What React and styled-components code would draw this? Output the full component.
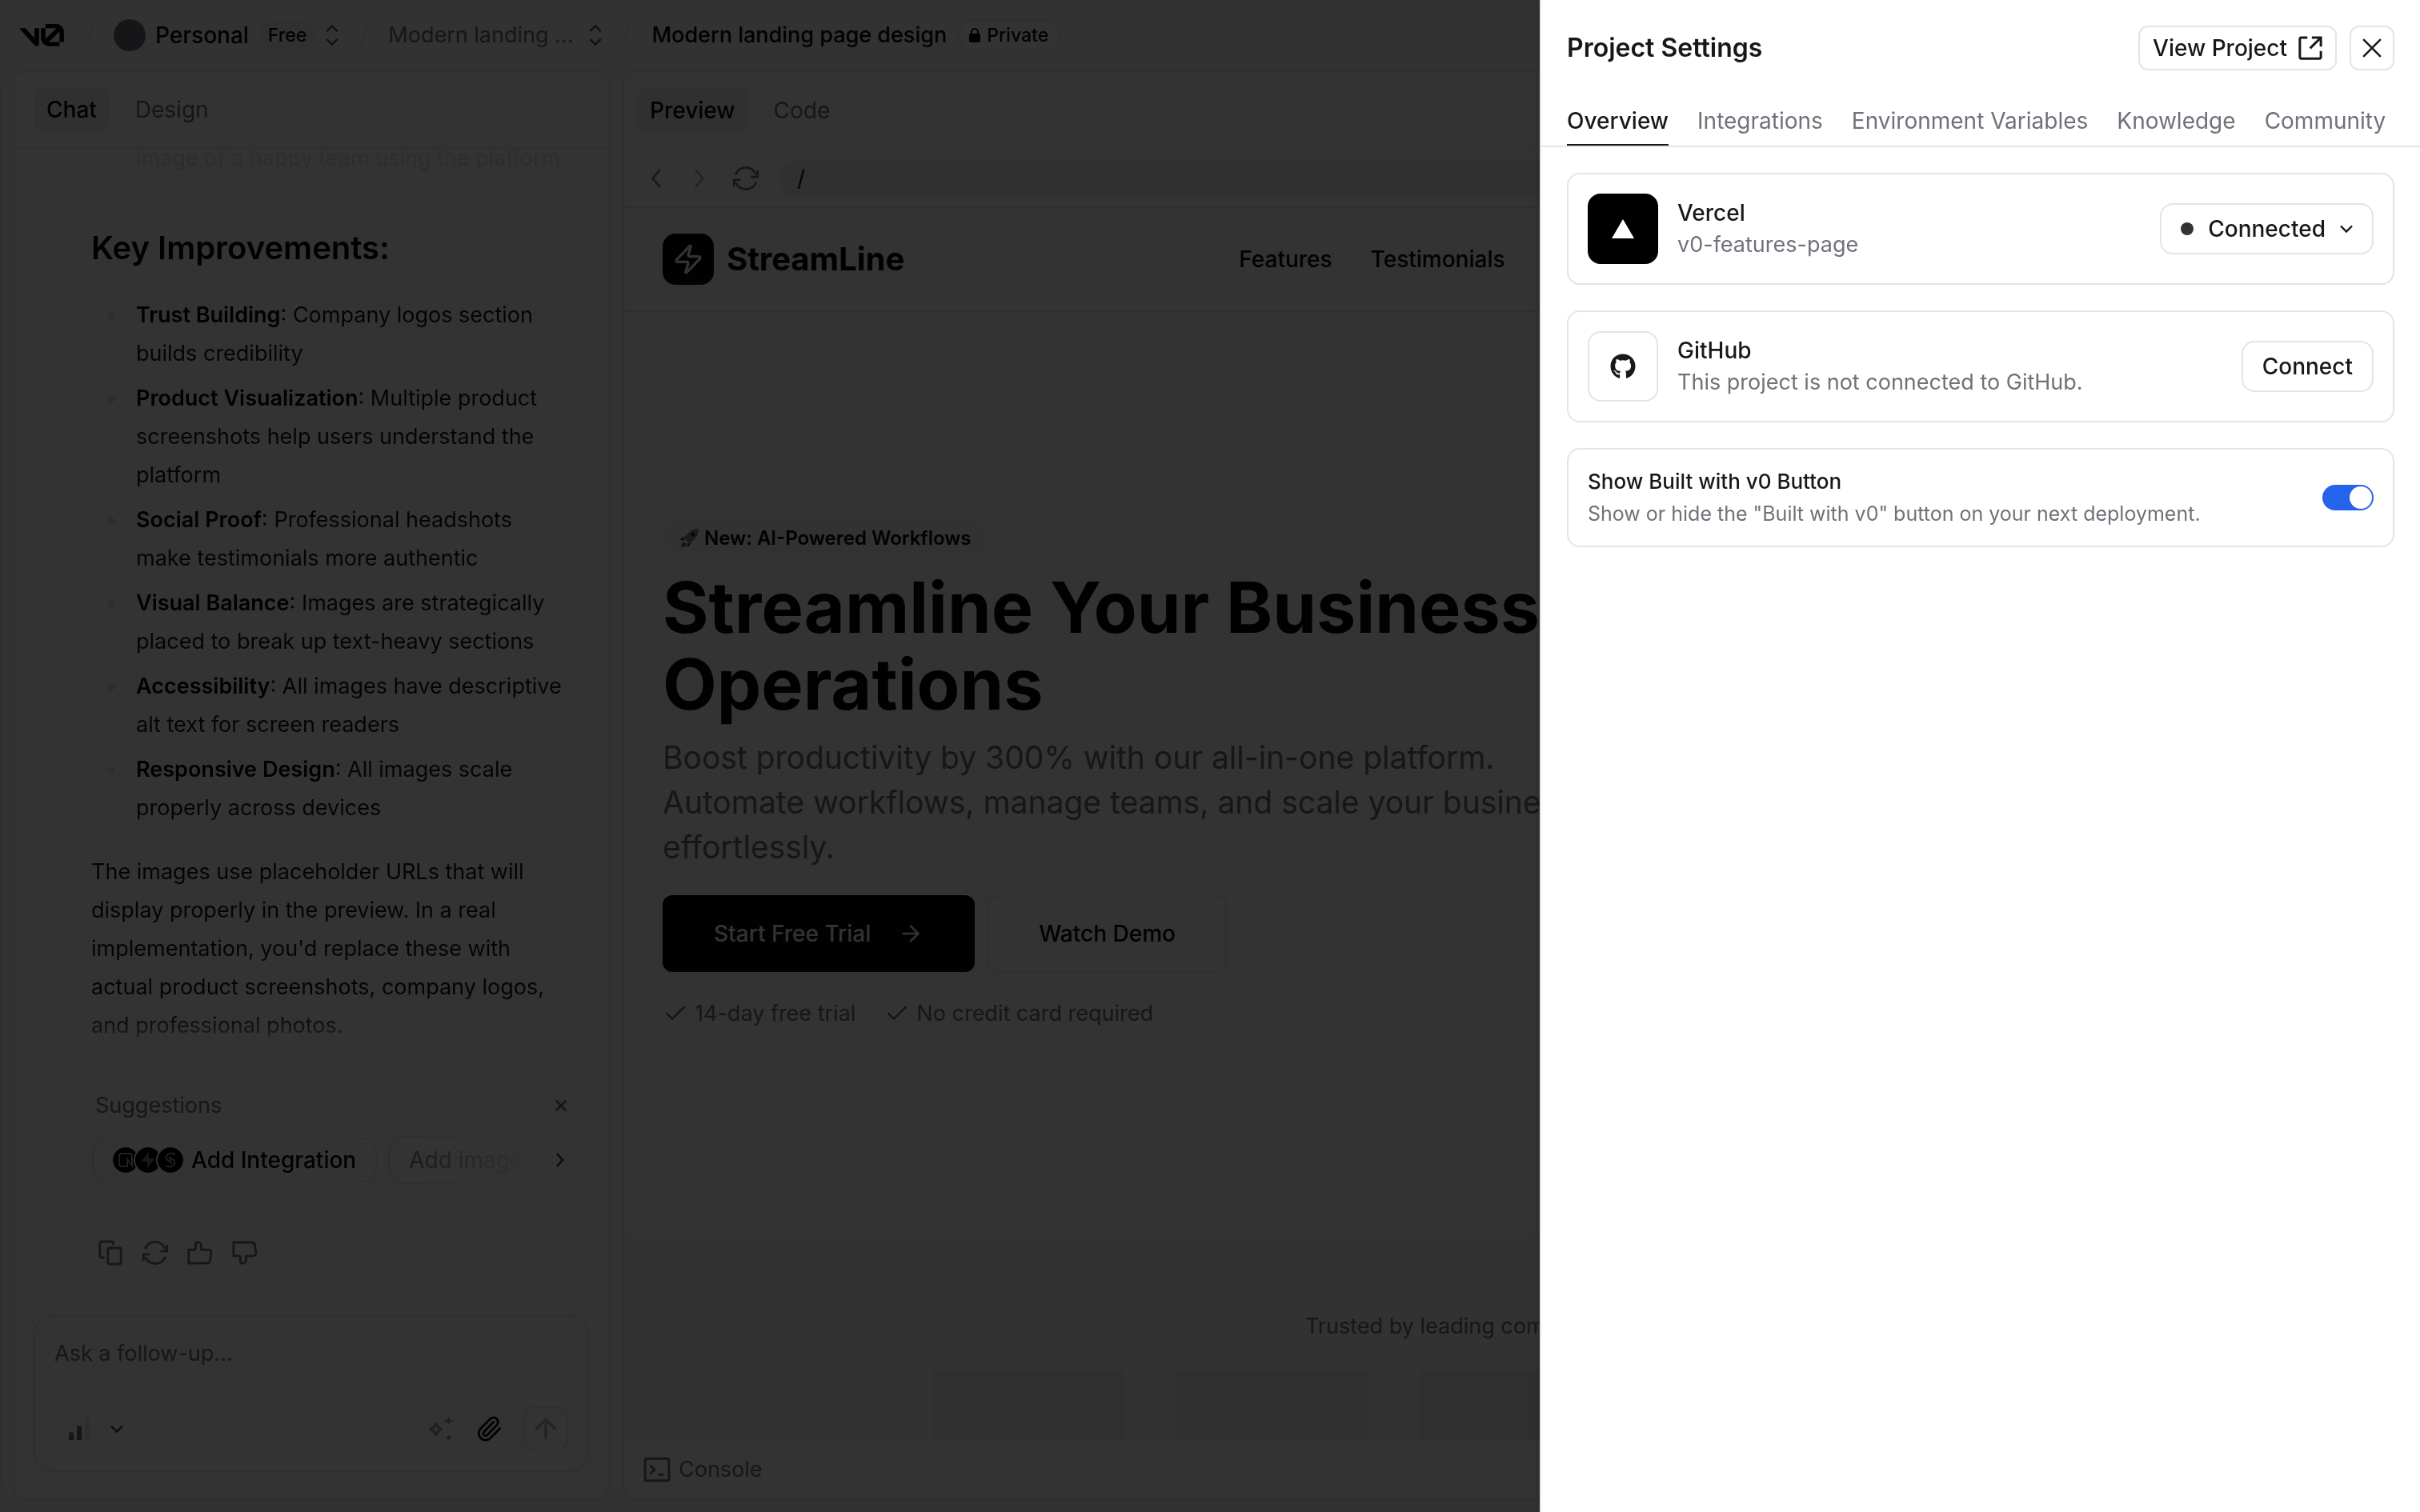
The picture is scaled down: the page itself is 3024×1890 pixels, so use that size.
import React, { useState } from "react";
import styled, { createGlobalStyle } from "styled-components";
import { Paperclip, Zap, ArrowUp, ArrowRight, Check, X } from "lucide-react";
import { FaGithub } from "react-icons/fa";

const GlobalStyle = createGlobalStyle`
  * {
    box-sizing: border-box;
  }
  body {
    margin: 0;
    background: #fafafa;
    color: #09090b;
    font-family: Inter, "Liberation Sans", sans-serif;
    font-size: 28px;
    line-height: 40px;
  }
  button, input, textarea {
    font: inherit;
    color: inherit;
  }
  button {
    border: 0;
    padding: 0;
    background: none;
    cursor: pointer;
  }
  a {
    color: inherit;
    text-decoration: none;
  }
  h1, h2, h3, p, ul {
    margin: 0;
    padding: 0;
  }
  svg {
    display: block;
    flex-shrink: 0;
  }
`;

const Page = styled.div`
  display: flex;
  flex-direction: column;
  height: 100vh;
  overflow: hidden;
`;

const Header = styled.header`
  display: flex;
  align-items: center;
  gap: 24px;
  height: 88px;
  padding: 0 24px;
  flex-shrink: 0;
  white-space: nowrap;
`;

const Crumb = styled.button`
  display: flex;
  align-items: center;
  gap: ${(props) => (props.$muted ? 20 : 12)}px;
  font-size: ${(props) => (props.$muted ? 27 : 28)}px;
  font-weight: ${(props) => (props.$muted ? 400 : 500)};
  color: ${(props) => (props.$muted ? "#71717a" : "#09090b")};
`;

const Avatar = styled.span`
  width: 40px;
  height: 40px;
  border-radius: 50%;
  background: #71717a;
`;

const Badge = styled.span`
  display: flex;
  align-items: center;
  gap: 8px;
  height: ${(props) => (props.$outline ? 40 : 36)}px;
  padding: 0 12px;
  border: ${(props) => (props.$outline ? "2px solid #e8e8ea" : "0")};
  border-radius: 20px;
  background: ${(props) => (props.$outline ? "#fff" : "#f0f0f1")};
  font-size: 23px;
  font-weight: 500;
`;

const CrumbTitle = styled.div`
  display: flex;
  align-items: center;
  gap: 14px;
  font-size: 27px;
  font-weight: 500;
`;

const Workspace = styled.div`
  display: flex;
  gap: 16px;
  flex: 1;
  min-height: 0;
  padding: 0 16px 16px 0;
`;

const SidebarEdge = styled.div`
  width: 2px;
  margin: 16px -2px 16px 0;
  background: #eaeaec;
`;

const Panel = styled.section`
  display: flex;
  flex-direction: column;
  min-width: 0;
  border: 2px solid #eaeaec;
  border-radius: 16px;
  background: #fff;
  box-shadow: 0 2px 4px rgba(0, 0, 0, 0.06);
  overflow: hidden;
`;

const ChatPanel = styled(Panel)`
  flex: 0 0 746px;
`;

const PreviewPanel = styled(Panel)`
  flex: 1;
`;

const PanelTabs = styled.div`
  display: flex;
  align-items: center;
  gap: 16px;
  height: ${(props) => props.$height || 96}px;
  padding: 0 ${(props) => props.$inset || 24}px;
  border-bottom: 2px solid #eaeaec;
  flex-shrink: 0;
`;

const PanelTab = styled.button`
  height: 56px;
  padding: 0 16px;
  border-radius: 12px;
  font-size: 28px;
  font-weight: ${(props) => (props.$active ? 500 : 400)};
  color: ${(props) => (props.$active ? "#09090b" : "#71717a")};
  background: ${(props) => (props.$active ? "#ededef" : "none")};
`;

const Messages = styled.div`
  display: flex;
  flex-direction: column;
  justify-content: flex-end;
  flex: 1;
  min-height: 0;
  padding: 0 52px 0 96px;
  overflow: hidden;
  font-size: 27px;
  line-height: 48px;
  color: #18181b;
  mask-image: linear-gradient(
    rgba(0, 0, 0, 0.1),
    rgba(0, 0, 0, 0.2) 40px,
    #000 100px,
    #000 calc(100% - 40px),
    rgba(0, 0, 0, 0.3)
  );
`;

const EarlierLine = styled.p`
  padding-left: 56px;
  margin-bottom: 64px;
  white-space: nowrap;
`;

const MessageHeading = styled.h3`
  margin-bottom: 36px;
  font-size: 40px;
  font-weight: 600;
  line-height: 48px;
  color: #09090b;
`;

const Points = styled.ul`
  display: flex;
  flex-direction: column;
  gap: 8px;
  margin-bottom: 32px;
  padding-left: 56px;
  list-style: none;
`;

const Point = styled.li`
  position: relative;

  &::before {
    content: "";
    position: absolute;
    left: -36px;
    top: 20px;
    width: 10px;
    height: 10px;
    border-radius: 50%;
    background: #e4e4e7;
  }

  & strong {
    font-weight: 600;
    color: #09090b;
  }
`;

const Suggestions = styled.div`
  display: flex;
  flex-direction: column;
  gap: 18px;
  padding: 56px 48px 0 97px;
`;

const SuggestionsHead = styled.div`
  display: flex;
  align-items: center;
  justify-content: space-between;
  padding-left: 4px;
  font-size: 27px;
  color: #71717a;
`;

const SuggestionRow = styled.div`
  display: flex;
  align-items: center;
  justify-content: space-between;
  height: 60px;
  padding-right: 8px;
  color: #3f3f46;
`;

const PillTrack = styled.div`
  display: flex;
  align-items: center;
  gap: 14px;
  width: 556px;
  overflow: hidden;
  white-space: nowrap;
  mask-image: linear-gradient(90deg, #000 68%, transparent);
`;

const Pill = styled.button`
  display: flex;
  align-items: center;
  gap: 10px;
  height: ${(props) => (props.$muted ? 60 : 56)}px;
  padding: 0 24px;
  border: 2px solid #e8e8ea;
  border-radius: 18px;
  flex-shrink: 0;
  font-weight: ${(props) => (props.$muted ? 400 : 500)};
  color: ${(props) => (props.$muted ? "#71717a" : "#09090b")};
`;

const LogoStack = styled.span`
  display: flex;

  & svg {
    border-radius: 50%;
    box-shadow: 0 0 0 2px #fff;
  }
  & svg + svg {
    margin-left: -4px;
  }
`;

const Actions = styled.div`
  display: flex;
  gap: 24px;
  padding: 70px 0 62px 104px;
  color: #71717a;
`;

const Composer = styled.form`
  display: flex;
  flex-direction: column;
  height: 196px;
  margin: 0 24px 32px;
  padding: 26px 24px 24px;
  border: 2px solid #e8e8ea;
  border-radius: 24px;
  box-shadow: 0 2px 4px rgba(0, 0, 0, 0.06);
  flex-shrink: 0;
`;

const ComposerInput = styled.textarea`
  flex: 1;
  padding: 0;
  border: 0;
  outline: 0;
  resize: none;
  background: none;
  font-size: 27px;

  &::placeholder {
    color: #71717a;
    opacity: 1;
  }
`;

const ComposerBar = styled.div`
  display: flex;
  align-items: center;
  justify-content: space-between;
  padding-left: 18px;
`;

const ComposerGroup = styled.div`
  display: flex;
  align-items: center;
  gap: ${(props) => props.$gap}px;
`;

const SendButton = styled.button`
  display: grid;
  place-items: center;
  width: 56px;
  height: 56px;
  border: 2px solid #e8e8ea;
  border-radius: 14px;
  color: #b4b4ba;
`;

const AddressBar = styled.div`
  display: flex;
  align-items: center;
  gap: 26px;
  height: 72px;
  padding: 0 34px;
  border-bottom: 2px solid #eaeaec;
  background: #fcfcfc;
  flex-shrink: 0;
  color: #71717a;
`;

const HistoryButtons = styled.div`
  display: flex;
  gap: 42px;
  margin-right: 10px;
`;

const HistoryButton = styled.button`
  opacity: ${(props) => (props.disabled ? 0.6 : 1)};
`;

const AddressInput = styled.input`
  flex: 1;
  height: 48px;
  padding: 0 22px;
  border: 0;
  border-radius: 24px;
  background: #ededef;
  color: #09090b;
`;

const Site = styled.div`
  display: flex;
  flex-direction: column;
  flex: 1;
  min-height: 0;
`;

const SiteNav = styled.nav`
  display: flex;
  align-items: center;
  gap: 48px;
  height: 130px;
  padding: 0 48px;
  border-bottom: 2px solid #eaeaec;
  font-weight: 500;
`;

const Brand = styled.a`
  display: flex;
  align-items: center;
  gap: 16px;
  margin-right: 370px;
  font-size: 40px;
  font-weight: 700;
`;

const BrandMark = styled.span`
  display: grid;
  place-items: center;
  width: 64px;
  height: 64px;
  border-radius: 16px;
  background: #09090b;
  color: #fafafa;
`;

const Hero = styled.div`
  display: flex;
  flex-direction: column;
  justify-content: center;
  align-items: flex-start;
  flex: 1;
  width: 1240px;
  padding: 6px 48px 0;
`;

const HeroBadge = styled.span`
  display: flex;
  align-items: center;
  gap: 6px;
  height: 44px;
  margin-bottom: 16px;
  padding: 0 20px;
  border-radius: 22px;
  background: #fafafa;
  font-size: 24px;
  font-weight: 600;
`;

const HeroTitle = styled.h1`
  margin-bottom: 16px;
  font-size: 88px;
  font-weight: 700;
  line-height: 96px;
`;

const HeroText = styled.p`
  margin-bottom: 32px;
  font-size: 39px;
  line-height: 56px;
  color: #71717a;
`;

const HeroButtons = styled.div`
  display: flex;
  gap: 16px;
  margin-bottom: 32px;
`;

const HeroButton = styled.button`
  display: flex;
  align-items: center;
  gap: 34px;
  height: 96px;
  padding: 0 62px;
  border: 2px solid ${(props) => (props.$primary ? "#09090b" : "#eaeaec")};
  border-radius: 12px;
  background: ${(props) => (props.$primary ? "#09090b" : "#fff")};
  color: ${(props) => (props.$primary ? "#fafafa" : "#09090b")};
  font-weight: 500;
`;

const Perks = styled.div`
  display: flex;
  gap: 36px;
  font-size: 27px;
  color: #71717a;
`;

const Perk = styled.span`
  display: flex;
  align-items: center;
  gap: 8px;
`;

const Trusted = styled.div`
  display: flex;
  flex-direction: column;
  align-items: center;
  gap: 34px;
  height: 260px;
  padding-top: 96px;
  background: #f7f7f8;
  font-size: 27px;
  color: #71717a;
  white-space: nowrap;
`;

const TrustedLogos = styled.div`
  display: grid;
  grid-template-columns: repeat(5, 240px);
  gap: 64px;
`;

const TrustedLogo = styled.div`
  height: 88px;
  background: #ebebed;
`;

const ConsoleBar = styled.button`
  display: flex;
  align-items: center;
  gap: 10px;
  height: 70px;
  padding: 0 24px;
  background: #fff;
  font-size: 27px;
  color: #71717a;
  flex-shrink: 0;
`;

const Overlay = styled.div`
  position: fixed;
  inset: 0;
  background: rgba(0, 0, 0, 0.8);
`;

const Drawer = styled.aside`
  position: fixed;
  top: 0;
  right: 0;
  bottom: 0;
  width: min(1100px, 100vw);
  border-left: 2px solid #e4e4e7;
  background: #fff;
  box-shadow: 0 0 12px rgba(0, 0, 0, 0.2);
  color: #18181b;
`;

const DrawerHeader = styled.div`
  display: flex;
  align-items: center;
  gap: 16px;
  height: 120px;
  padding: 0 32px;
`;

const DrawerTitle = styled.h2`
  flex: 1;
  font-size: 32px;
  font-weight: 600;
`;

const OutlineLink = styled.a`
  display: flex;
  align-items: center;
  gap: 14px;
  height: 56px;
  padding: 0 16px;
  border: 2px solid #e4e4e7;
  border-radius: 12px;
  font-weight: 500;
`;

const CloseButton = styled.button`
  display: grid;
  place-items: center;
  width: 56px;
  height: 56px;
  border: 2px solid #e4e4e7;
  border-radius: 12px;
`;

const DrawerTabs = styled.div`
  display: flex;
  gap: 36px;
  height: 64px;
  padding: 0 32px;
  border-bottom: 2px solid #e4e4e7;
  white-space: nowrap;
`;

const DrawerTab = styled.button`
  padding-top: 2px;
  border-bottom: 2px solid ${(props) => (props.$active ? "#18181b" : "transparent")};
  font-weight: ${(props) => (props.$active ? 500 : 400)};
  color: ${(props) => (props.$active ? "#18181b" : "#71717a")};
`;

const Cards = styled.div`
  display: flex;
  flex-direction: column;
  gap: 32px;
  padding: 32px;
`;

const Card = styled.div`
  display: flex;
  align-items: center;
  gap: 24px;
  padding: ${(props) => (props.$compact ? "20px" : "24px")} 24px;
  border: 2px solid #e4e4e7;
  border-radius: 16px;
`;

const CardIcon = styled.div`
  display: grid;
  place-items: center;
  width: 88px;
  height: 88px;
  border: 2px solid ${(props) => (props.$dark ? "#000" : "#e4e4e7")};
  border-radius: 16px;
  background: ${(props) => (props.$dark ? "#000" : "#fff")};
  color: ${(props) => (props.$dark ? "#fff" : "#18181b")};
`;

const CardText = styled.div`
  flex: 1;
`;

const CardTitle = styled.div`
  display: block;
  font-size: ${(props) => (props.$compact ? 26 : 28)}px;
  font-weight: 500;
`;

const CardNote = styled.p`
  font-size: ${(props) => (props.$compact ? 25 : 27)}px;
  color: #71717a;
`;

const CardButton = styled.button`
  display: flex;
  align-items: center;
  gap: 18px;
  height: 64px;
  padding: 0 24px;
  border: 2px solid #e4e4e7;
  border-radius: 16px;
  font-weight: 500;
`;

const StatusDot = styled.span`
  width: 16px;
  height: 16px;
  border-radius: 50%;
  background: #333;
`;

const Switch = styled.input`
  appearance: none;
  display: flex;
  align-items: center;
  width: 64px;
  height: 32px;
  margin: 0;
  padding: 2px;
  border-radius: 16px;
  background: ${(props) => (props.checked ? "#2563eb" : "#e4e4e7")};
  justify-content: ${(props) => (props.checked ? "flex-end" : "flex-start")};

  &::before {
    content: "";
    width: 28px;
    height: 28px;
    border-radius: 50%;
    background: #fff;
  }
`;

const points = [
  ["Trust Building", "Company logos section builds credibility"],
  ["Product Visualization", "Multiple product screenshots help users understand the platform"],
  ["Social Proof", "Professional headshots make testimonials more authentic"],
  ["Visual Balance", "Images are strategically placed to break up text-heavy sections"],
  ["Accessibility", "All images have descriptive alt text for screen readers"],
  ["Responsive Design", "All images scale properly across devices"],
];

const drawerTabs = ["Overview", "Integrations", "Environment Variables", "Knowledge", "Community"];

function Icon({ size = 32, width, box = "0 0 16 16", stroke = 1.4, color = "currentColor", children }) {
  return (
    <svg
      width={width || size}
      height={size}
      viewBox={box}
      fill="none"
      stroke={color}
      strokeWidth={stroke}
      aria-hidden="true"
    >
      {children}
    </svg>
  );
}

const V0Logo = () => (
  <svg width="56" height="28" viewBox="0 0 40 20" fill="#09090b" aria-label="v0">
    <path d="M23.39 0h9.53c3.86 0 7 3.13 7 7v9.08H36V7c0-.1 0-.19-.01-.28l-9.53 9.36h9.54v3.7h-9.44c-3.86 0-7.08-3.17-7.08-7.03V3.69h3.91v9.06c0 .18.01.35.04.52l9.74-9.57a3 3 0 0 0-.25-.01h-9.53V0Z" />
    <path d="M13.77 19.1 0 3.69h5.54l8.08 9.04V3.69h4.13v13.88c0 2.1-2.59 3.09-3.98 1.53Z" />
  </svg>
);

const Slash = () => (
  <svg width="14" height="32" viewBox="0 0 14 32" stroke="#e4e4e7" strokeWidth="2" aria-hidden="true">
    <path d="M2 31 12 1" />
  </svg>
);

const UpDown = () => (
  <Icon size={32} width={16} box="0 0 8 16" stroke={1.2} color="#52525b">
    <path d="m.6 5.6 3.4-3.4 3.4 3.4M.6 10.4 4 13.8l3.4-3.4" />
  </Icon>
);

const Lock = () => (
  <svg width="14" height="18" viewBox="0 0 14 18" aria-hidden="true">
    <path d="M3 8V5a4 4 0 0 1 8 0v3" fill="none" stroke="#09090b" strokeWidth="2" />
    <rect y="7" width="14" height="11" rx="2" fill="#09090b" />
  </svg>
);

const Refresh = () => (
  <Icon>
    <path d="M1.6 5.6a6.75 6.75 0 0 1 12.6-.2M15.4 3v4.1h-4.2M14.4 10.4a6.75 6.75 0 0 1-12.6.2M.6 13V8.9h4.2" />
  </Icon>
);

const Copy = () => (
  <Icon>
    <rect x="6.4" y="5" width="8.2" height="10" rx="1" />
    <path d="M9.8 3.2V2a1 1 0 0 0-1-1H2.4a1 1 0 0 0-1 1v8a1 1 0 0 0 1 1h1.9" />
  </Icon>
);

const thumbPath =
  "M.9 6.1h3.2c.7 0 1.1-.4 1.1-1.1V2.6c0-.7.5-1.3 1.2-1.3 1.3 0 2.4 1.1 2.4 2.4v2.4h4.3c1.2 0 2 1 1.8 2.1l-.7 4.6a2 2 0 0 1-2 1.7H.9z";

const ThumbUp = () => (
  <Icon>
    <path d={thumbPath} />
  </Icon>
);

const ThumbDown = () => (
  <Icon>
    <path transform="matrix(1 0 0 -1 0 16)" d={thumbPath} />
  </Icon>
);

const ChevronDownSmall = ({ color }) => (
  <Icon size={16} stroke={2.4} color={color}>
    <path d="m1 4.500 7 7 7-7" />
  </Icon>
);

const ChevronSide = ({ flip, size = 24, stroke = 2.6 }) => (
  <Icon size={size} width={size / 2} box="0 0 12 24" stroke={stroke}>
    <path d={flip ? "M11 1 1.5 12 11 23" : "m1 1 9.5 11L1 23"} />
  </Icon>
);

const Sparkles = () => (
  <svg width="34" height="34" viewBox="0 0 32 32" fill="#a1a1aa" aria-hidden="true">
    <path
      d="M10 9c1 4.600 3 6.400 7.400 7.400C13 17.400 11 19.400 10 24c-1-4.600-3-6.600-7.400-7.600C7 15.400 9 13.600 10 9Z"
      fill="none"
      stroke="#a1a1aa"
      strokeWidth="3"
    />
    <path d="M25 1c.8 3.500 2 4.700 6 5.500-4 .8-5.200 2-6 6-.8-4-2-5.200-6-6 4-.8 5.200-2 6-5.500ZM25.500 23l3.500 3.500-3.500 3.500-3.500-3.500z" />
  </svg>
);

const Bars = () => (
  <svg width="28" height="28" viewBox="0 0 28 28" fill="#71717a" aria-hidden="true">
    <path d="M0 21a3 3 0 0 1 6 0v7H0zM10 13a3 3 0 0 1 6 0v15h-6z" />
    <path d="M20 3a3 3 0 0 1 6 0v25h-6z" fill="#e4e4e7" />
  </svg>
);

const ExternalLink = () => (
  <Icon size={30} stroke={1.6}>
    <path d="M6 1H2a1 1 0 0 0-1 1v12a1 1 0 0 0 1 1h12a1 1 0 0 0 1-1v-4M9 1h6v6M14.700 1.300 7.800 8.200" />
  </Icon>
);

const Rocket = () => (
  <svg width="26" height="26" viewBox="0 0 26 26" aria-hidden="true">
    <path d="M7 10 1 15l6 .5M16 19l-5 6-.5-6" fill="#52525b" />
    <path d="M25 1C17 1 11 5 7 13l6 6c8-4 12-10 12-18Z" fill="#85858c" />
    <path d="M7 17c-3 1-4 4-4 7 3 0 6-1 7-4z" fill="#71717a" />
    <circle cx="18" cy="8" r="2.500" fill="#27272a" />
  </svg>
);

const IntegrationLogos = () => (
  <LogoStack>
    <svg width="32" height="32" viewBox="0 0 32 32" aria-hidden="true">
      <circle cx="16" cy="16" r="16" fill="#000" />
      <path
        d="M16 24h-5a3 3 0 0 1-3-3V11a3 3 0 0 1 3-3h10a3 3 0 0 1 3 3v12l-6-8v9z"
        fill="none"
        stroke="#a1a1aa"
        strokeWidth="2"
      />
    </svg>
    <svg width="32" height="32" viewBox="0 0 32 32" aria-hidden="true">
      <circle cx="16" cy="16" r="16" fill="#000" />
      <path d="M17 6 7 18h8v8l10-12h-8z" fill="#71717a" />
    </svg>
    <svg width="32" height="32" viewBox="0 0 32 32" aria-hidden="true">
      <circle cx="16" cy="16" r="16" fill="#000" />
      <g fill="none" stroke="#a1a1aa" strokeWidth="2">
        <path d="M22 9c-5-3-10-1-11 3-1 3 1 5 4 5 2 0 3 2 1 3" />
        <path d="M10 23c5 3 10 1 11-3 1-3-1-5-4-5-2 0-3-2-1-3" />
      </g>
    </svg>
  </LogoStack>
);

function TopBar() {
  return (
    <Header>
      <V0Logo />
      <Slash />
      <Crumb>
        <Avatar />
        Personal
        <Badge>Free</Badge>
        <UpDown />
      </Crumb>
      <Slash />
      <Crumb $muted>
        Modern landing ...
        <UpDown />
      </Crumb>
      <Slash />
      <CrumbTitle>
        Modern landing page design
        <Badge $outline>
          <Lock />
          Private
        </Badge>
      </CrumbTitle>
    </Header>
  );
}

function Chat() {
  return (
    <ChatPanel>
      <PanelTabs>
        <PanelTab $active>Chat</PanelTab>
        <PanelTab>Design</PanelTab>
      </PanelTabs>
      <Messages>
        <EarlierLine>image of a happy team using the platform</EarlierLine>
        <MessageHeading>Key Improvements:</MessageHeading>
        <Points>
          {points.map(([name, text]) => (
            <Point key={name}>
              <strong>{name}</strong>: {text}
            </Point>
          ))}
        </Points>
        <p>
          The images use placeholder URLs that will display properly in the preview. In a real
          implementation, you'd replace these with actual product screenshots, company logos, and
          professional photos.
        </p>
      </Messages>
      <Suggestions>
        <SuggestionsHead>
          Suggestions
          <button aria-label="Dismiss suggestions">
            <X size={22} strokeWidth={3} />
          </button>
        </SuggestionsHead>
        <SuggestionRow>
          <PillTrack>
            <Pill>
              <IntegrationLogos />
              Add Integration
            </Pill>
            <Pill $muted>Add image generation</Pill>
          </PillTrack>
          <button aria-label="More suggestions">
            <ChevronSide size={18} stroke={3.4} />
          </button>
        </SuggestionRow>
      </Suggestions>
      <Actions>
        <button aria-label="Copy">
          <Copy />
        </button>
        <button aria-label="Retry">
          <Refresh />
        </button>
        <button aria-label="Good response">
          <ThumbUp />
        </button>
        <button aria-label="Bad response">
          <ThumbDown />
        </button>
      </Actions>
      <Composer>
        <ComposerInput aria-label="Ask a follow-up" placeholder="Ask a follow-up…" />
        <ComposerBar>
          <ComposerGroup $gap={24}>
            <Bars />
            <ChevronDownSmall color="#3f3f46" />
          </ComposerGroup>
          <ComposerGroup $gap={26}>
            <Sparkles />
            <Paperclip size={34} strokeWidth={2} />
            <SendButton type="button" aria-label="Send">
              <ArrowUp size={40} strokeWidth={2} />
            </SendButton>
          </ComposerGroup>
        </ComposerBar>
      </Composer>
    </ChatPanel>
  );
}

function Preview() {
  return (
    <PreviewPanel>
      <PanelTabs $height={98} $inset={16}>
        <PanelTab $active>Preview</PanelTab>
        <PanelTab>Code</PanelTab>
      </PanelTabs>
      <AddressBar>
        <HistoryButtons>
          <HistoryButton aria-label="Back">
            <ChevronSide flip />
          </HistoryButton>
          <HistoryButton aria-label="Forward" disabled>
            <ChevronSide />
          </HistoryButton>
        </HistoryButtons>
        <button aria-label="Reload">
          <Refresh />
        </button>
        <AddressInput aria-label="Path" defaultValue="/" />
      </AddressBar>
      <Site>
        <SiteNav>
          <Brand href="#home">
            <BrandMark>
              <Zap size={40} strokeWidth={2} />
            </BrandMark>
            StreamLine
          </Brand>
          <a href="#features">Features</a>
          <a href="#testimonials">Testimonials</a>
        </SiteNav>
        <Hero>
          <HeroBadge>
            <Rocket />
            New: AI-Powered Workflows
          </HeroBadge>
          <HeroTitle>Streamline Your Business Operations</HeroTitle>
          <HeroText>
            Boost productivity by 300% with our all-in-one platform. Automate workflows, manage
            teams, and scale your business effortlessly.
          </HeroText>
          <HeroButtons>
            <HeroButton $primary>
              Start Free Trial
              <ArrowRight size={32} strokeWidth={2} />
            </HeroButton>
            <HeroButton>Watch Demo</HeroButton>
          </HeroButtons>
          <Perks>
            <Perk>
              <Check size={32} strokeWidth={2} />
              14-day free trial
            </Perk>
            <Perk>
              <Check size={32} strokeWidth={2} />
              No credit card required
            </Perk>
          </Perks>
        </Hero>
        <Trusted>
          Trusted by leading companies worldwide
          <TrustedLogos>
            {[1, 2, 3, 4, 5].map((n) => (
              <TrustedLogo key={n} />
            ))}
          </TrustedLogos>
        </Trusted>
      </Site>
      <ConsoleBar>
        <Icon size={34}>
          <rect x="1" y="1.500" width="14" height="13" rx="1" />
          <path d="m4 5.500 2.500 2.500L4 10.500M8.500 11h3.500" />
        </Icon>
        Console
      </ConsoleBar>
    </PreviewPanel>
  );
}

function SettingsDrawer() {
  const [tab, setTab] = useState("Overview");
  const [showButton, setShowButton] = useState(true);

  return (
    <Drawer role="dialog" aria-label="Project Settings">
      <DrawerHeader>
        <DrawerTitle>Project Settings</DrawerTitle>
        <OutlineLink href="#project">
          View Project
          <ExternalLink />
        </OutlineLink>
        <CloseButton aria-label="Close">
          <Icon size={24} stroke={1.7}>
            <path d="m.8.8 14.400 14.400M15.200.8.8 15.200" />
          </Icon>
        </CloseButton>
      </DrawerHeader>
      <DrawerTabs role="tablist">
        {drawerTabs.map((name) => (
          <DrawerTab
            key={name}
            role="tab"
            aria-selected={tab === name}
            $active={tab === name}
            onClick={() => setTab(name)}
          >
            {name}
          </DrawerTab>
        ))}
      </DrawerTabs>
      <Cards>
        <Card>
          <CardIcon $dark>
            <svg width="28" height="24" viewBox="0 0 28 24" fill="currentColor" aria-hidden="true">
              <path d="m14 0 14 24H0z" />
            </svg>
          </CardIcon>
          <CardText>
            <CardTitle>Vercel</CardTitle>
            <CardNote>v0-features-page</CardNote>
          </CardText>
          <CardButton>
            <StatusDot />
            Connected
            <ChevronDownSmall />
          </CardButton>
        </Card>
        <Card>
          <CardIcon>
            <FaGithub size={32} />
          </CardIcon>
          <CardText>
            <CardTitle>GitHub</CardTitle>
            <CardNote>This project is not connected to GitHub.</CardNote>
          </CardText>
          <CardButton>Connect</CardButton>
        </Card>
        <Card $compact>
          <CardText>
            <CardTitle as="label" htmlFor="built-with" $compact>
              Show Built with v0 Button
            </CardTitle>
            <CardNote $compact>
              Show or hide the "Built with v0" button on your next deployment.
            </CardNote>
          </CardText>
          <Switch
            id="built-with"
            type="checkbox"
            role="switch"
            checked={showButton}
            onChange={(e) => setShowButton(e.target.checked)}
          />
        </Card>
      </Cards>
    </Drawer>
  );
}

function App() {
  return (
    <>
      <GlobalStyle />
      <Page>
        <TopBar />
        <Workspace>
          <SidebarEdge />
          <Chat />
          <Preview />
        </Workspace>
      </Page>
      <Overlay />
      <SettingsDrawer />
    </>
  );
}

export default App;
